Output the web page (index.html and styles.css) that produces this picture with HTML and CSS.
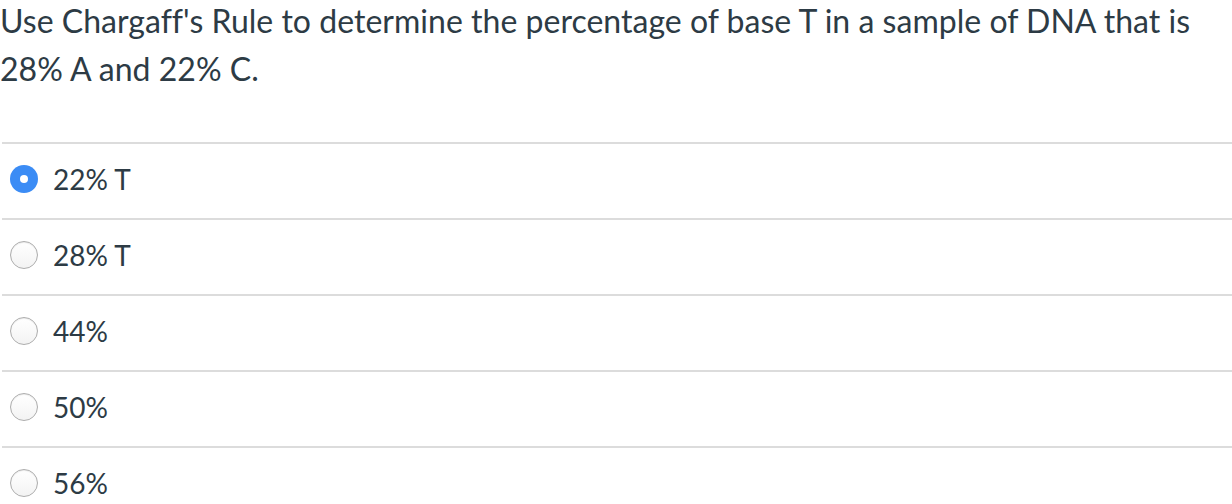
FILE: index.html
```html
<!DOCTYPE html>
<html>
<head>
<meta charset="utf-8">
<link rel="stylesheet" href="styles.css">
</head>
<body>
<div class="question">
  <p class="question-text">Use Chargaff's Rule to determine the percentage of base T in a sample of DNA that is 28% A and 22% C.</p>
  <div class="answers">
    <label class="answer"><span class="radio checked"></span><span class="label">22% T</span></label>
    <label class="answer"><span class="radio"></span><span class="label">28% T</span></label>
    <label class="answer"><span class="radio"></span><span class="label">44%</span></label>
    <label class="answer"><span class="radio"></span><span class="label">50%</span></label>
    <label class="answer"><span class="radio"></span><span class="label">56%</span></label>
  </div>
</div>
</body>
</html>
```

FILE: styles.css
```css
html, body {
  margin: 0;
  padding: 0;
  background: #ffffff;
}
body {
  font-family: Lato, "Liberation Sans", sans-serif;
  color: #2d3b45;
  font-variant-ligatures: none;
}
.question-text {
  margin: 0;
  padding: 0 40px 0 0;
  font-size: 32px;
  line-height: 48px;
  letter-spacing: 0.02px;
  margin-top: -3px;
  height: 145px;
  box-sizing: border-box;
}
.answers {
  padding-left: 2px;
}
.answer {
  display: flex;
  align-items: center;
  gap: 15px;
  height: 74px;
  box-sizing: content-box;
  border-top: 2px solid #dcdcdc;
  padding-left: 8px;
}
.answer > * {
  margin-bottom: 4px;
}
.radio {
  width: 28px;
  height: 28px;
  border-radius: 50%;
  box-sizing: border-box;
  border: 1px solid #adadad;
  background: linear-gradient(#ffffff, #f3f3f3);
  box-shadow: inset 0 1px 1px rgba(0,0,0,0.08);
  position: relative;
  flex: none;
}
.radio.checked {
  border: none;
  background: #3b8cf5;
  box-shadow: none;
}
.radio.checked::after {
  content: "";
  position: absolute;
  left: 10px;
  top: 10px;
  width: 8px;
  height: 8px;
  border-radius: 50%;
  background: #ffffff;
}
.label {
  font-size: 28px;
  line-height: 34px;
}
```
